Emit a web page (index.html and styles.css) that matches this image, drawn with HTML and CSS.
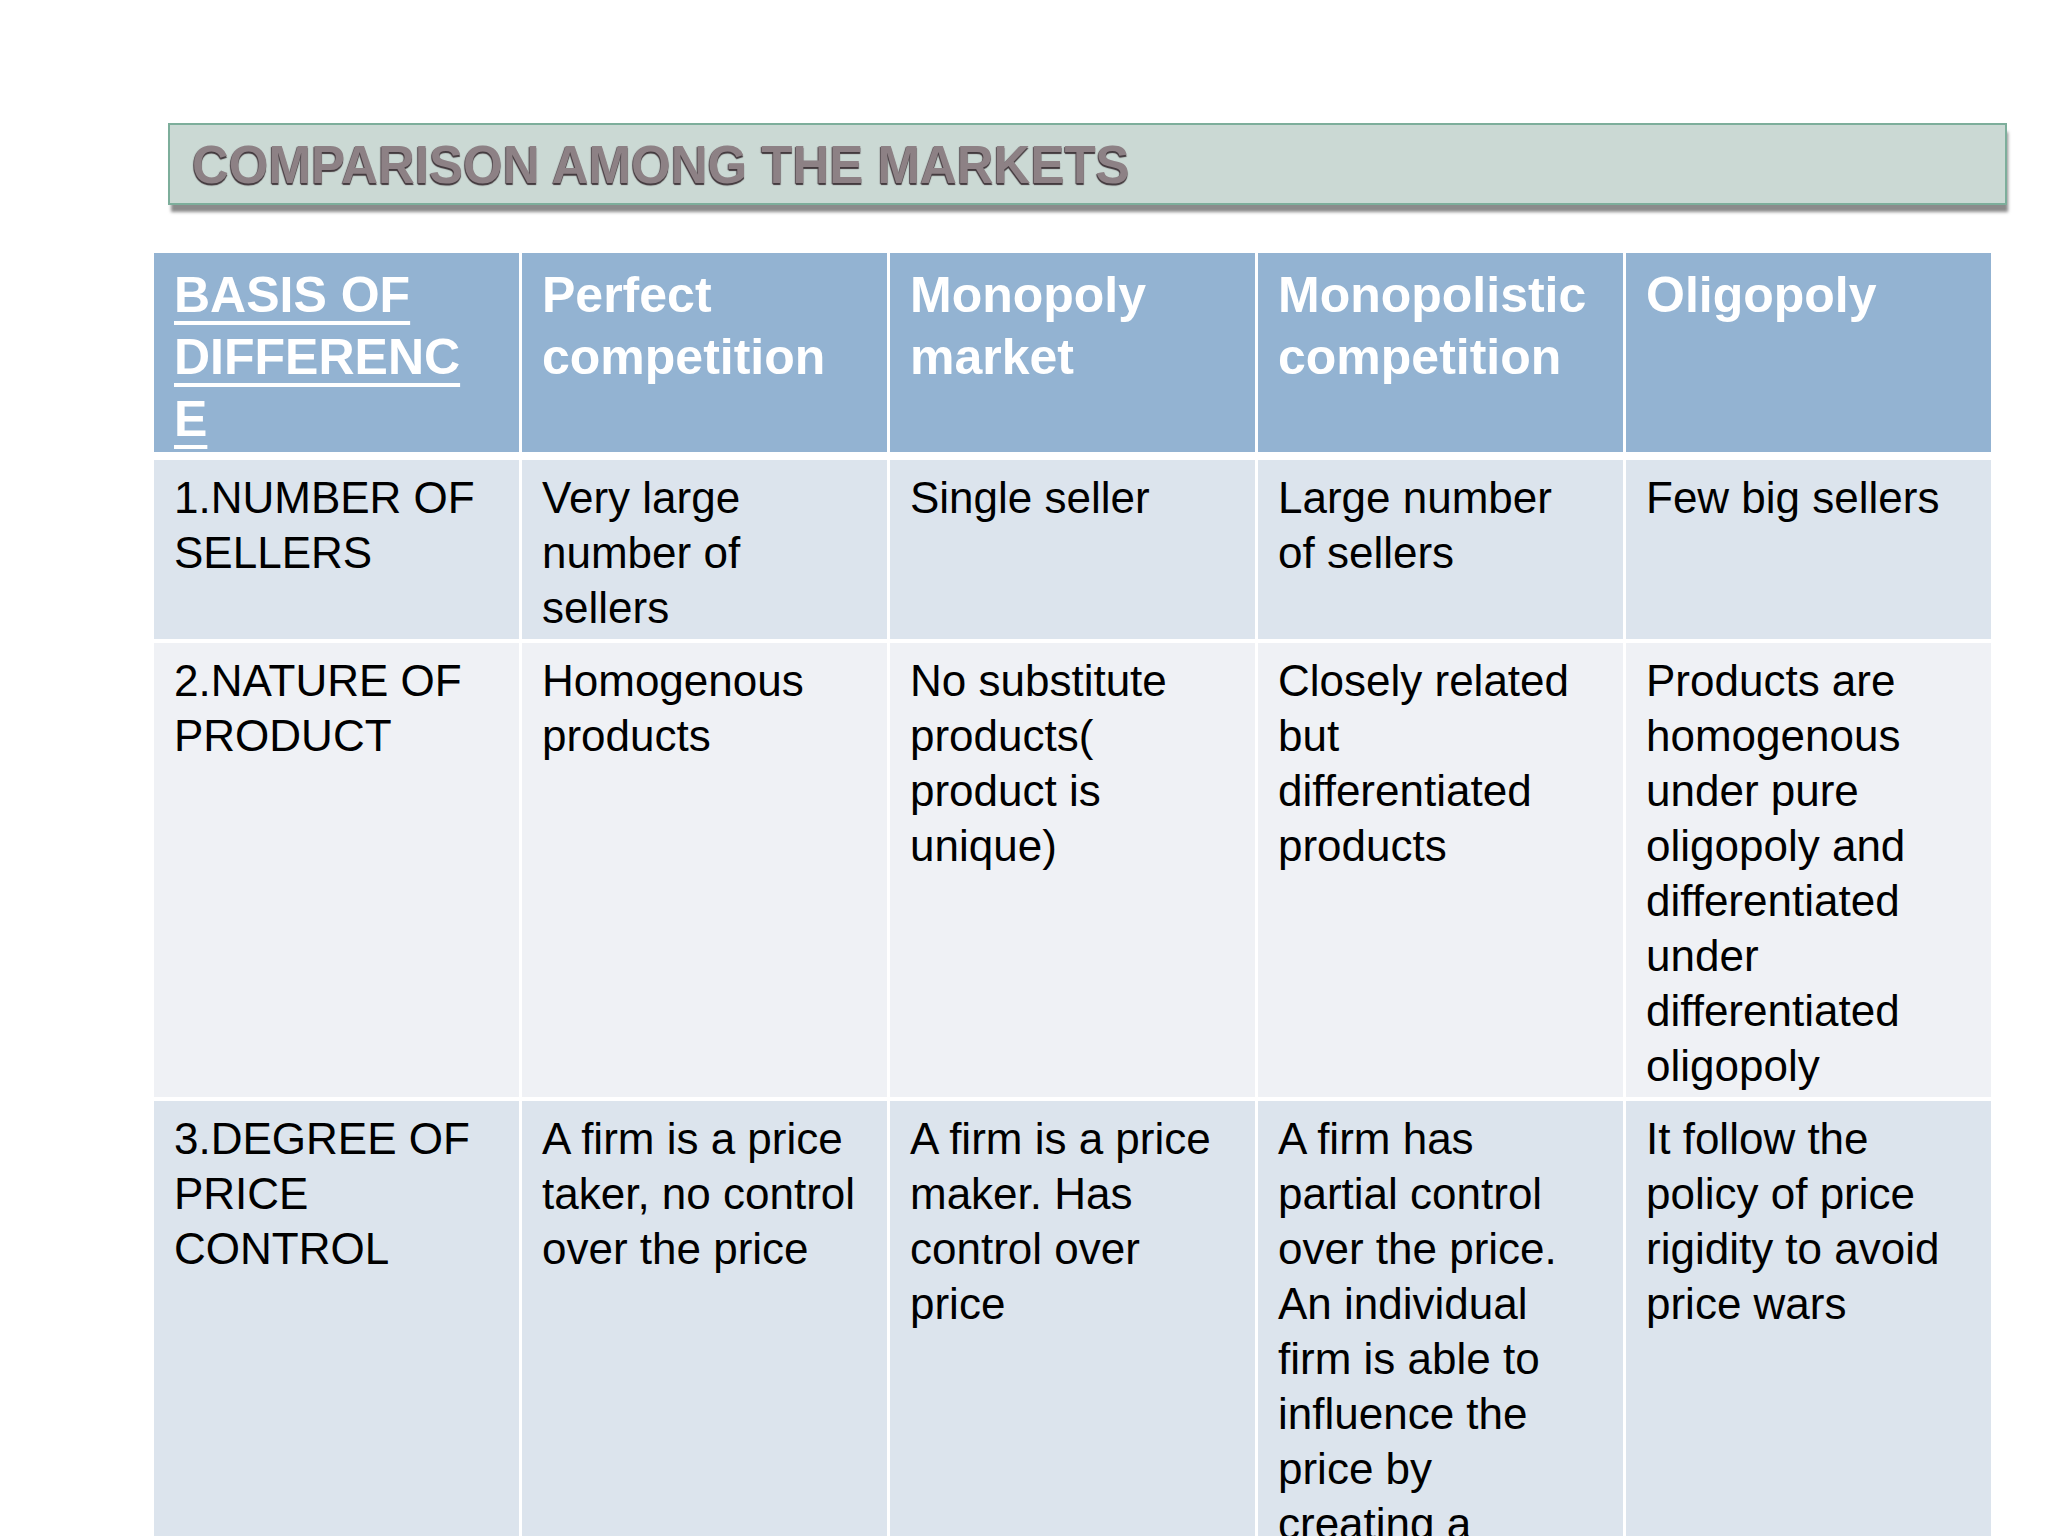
FILE: index.html
```html
<!DOCTYPE html>
<html lang="en">
<head>
<meta charset="utf-8">
<title>Comparison among the markets</title>
<link rel="stylesheet" href="styles.css">
</head>
<body>
<div class="slide">
  <div class="title-box">
    <h1 class="title">COMPARISON AMONG THE MARKETS</h1>
  </div>
  <div class="grid">
    <div class="cell head"><span class="ul">BASIS OF DIFFERENC<br>E</span></div>
    <div class="cell head">Perfect competition</div>
    <div class="cell head">Monopoly market</div>
    <div class="cell head">Monopolistic competition</div>
    <div class="cell head">Oligopoly</div>

    <div class="cell odd">1.NUMBER OF SELLERS</div>
    <div class="cell odd">Very large number of sellers</div>
    <div class="cell odd">Single seller</div>
    <div class="cell odd">Large number of sellers</div>
    <div class="cell odd">Few big sellers</div>

    <div class="cell even">2.NATURE OF PRODUCT</div>
    <div class="cell even">Homogenous products</div>
    <div class="cell even">No substitute products( product is unique)</div>
    <div class="cell even">Closely related but differentiated products</div>
    <div class="cell even">Products are homogenous under pure oligopoly and differentiated under differentiated oligopoly</div>

    <div class="cell odd">3.DEGREE OF PRICE CONTROL</div>
    <div class="cell odd">A firm is a price taker, no control over the price</div>
    <div class="cell odd">A firm is a price maker. Has control over price</div>
    <div class="cell odd">A firm has partial control over the price. An individual firm is able to influence the price by creating a product differentiation.</div>
    <div class="cell odd">It follow the policy of price rigidity to avoid price wars</div>
  </div>
</div>
</body>
</html>
```
FILE: styles.css
```css
html, body {
  margin: 0;
  padding: 0;
  background: #ffffff;
}
body {
  width: 2048px;
  height: 1536px;
  overflow: hidden;
  font-family: "Liberation Sans", Arial, sans-serif;
}
.slide {
  padding-top: 123px;
  padding-left: 154px;
}
.title-box {
  margin-left: 14px;
  width: 1839px;
  height: 82px;
  box-sizing: border-box;
  background: #cbd9d4;
  border: 2px solid #7dae9b;
  box-shadow: 2px 8px 3px -1px rgba(110, 110, 110, 0.8);
  padding: 13px 0 0 22px;
}
.title {
  margin: 0;
  display: inline-block;
  font-size: 53px;
  line-height: 53px;
  font-weight: bold;
  color: #8d8185;
  text-shadow: 0 2px 1px #433a3e, -1px 1px 1px #5a5055;
  transform: scaleX(0.962);
  transform-origin: left center;
  white-space: nowrap;
}
.grid {
  margin-top: 48px;
  width: 1837px;
  display: grid;
  grid-template-columns: repeat(5, 1fr);
  column-gap: 3px;
  row-gap: 4px;
}
.cell {
  padding: 10px 27px 4px 20px;
  font-size: 44px;
  line-height: 55px;
  color: #000;
}
.head {
  background: #93b3d2;
  color: #fff;
  font-weight: bold;
  font-size: 50px;
  line-height: 62px;
  padding-top: 11px;
  padding-bottom: 2px;
  margin-bottom: 4px;
}
.ul {
  text-decoration: underline;
  text-decoration-thickness: 4px;
  text-underline-offset: 9px;
}
.odd {
  background: #dce4ed;
}
.even {
  background: #eff1f5;
}
```
